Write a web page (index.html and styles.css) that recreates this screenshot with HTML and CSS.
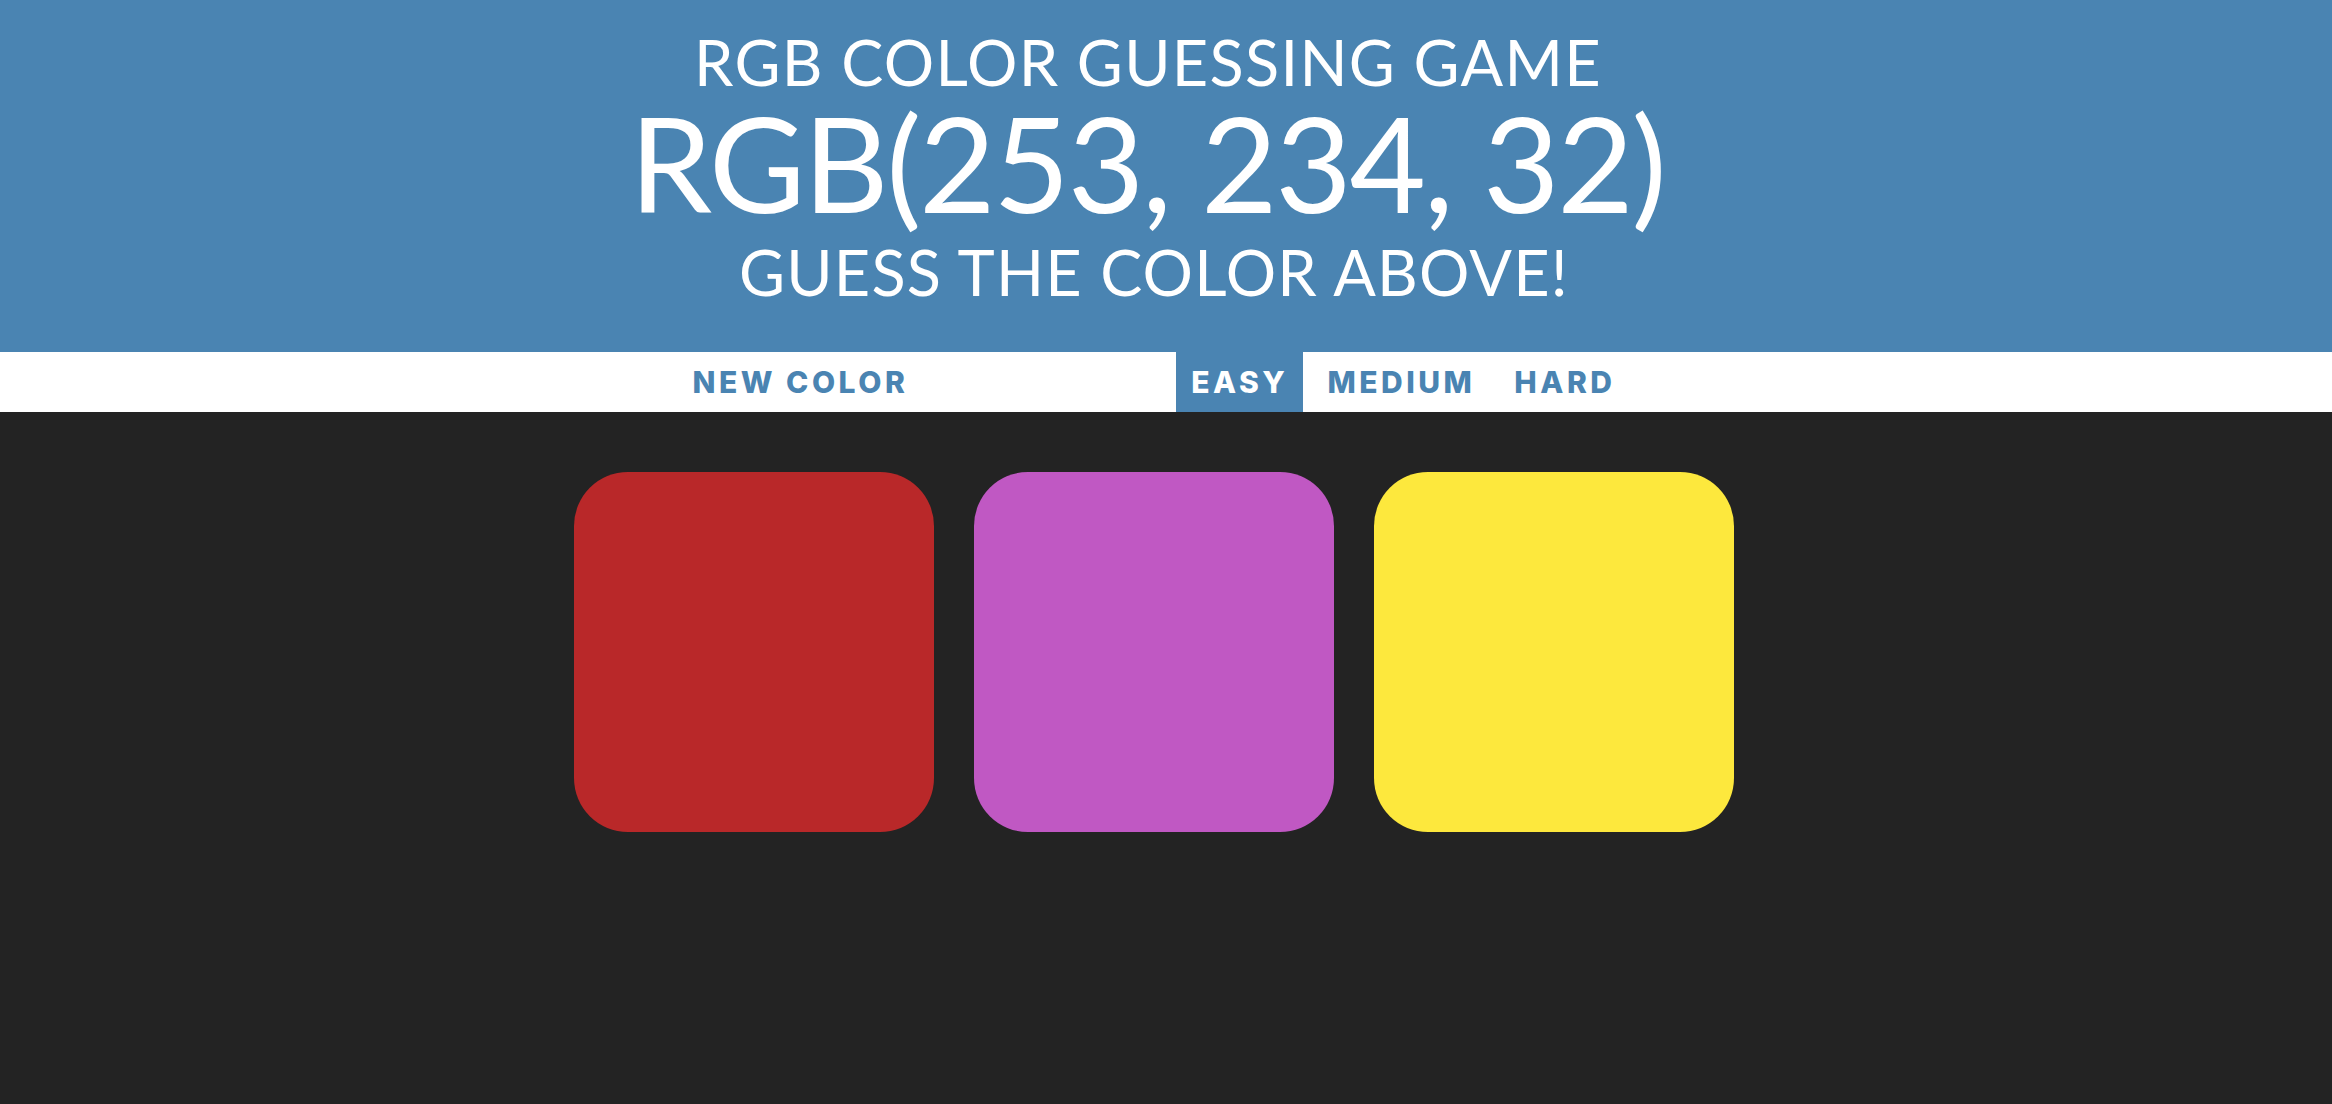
FILE: index.html
```html
<!DOCTYPE html>
<html lang="en">
  <head>
    <link rel="stylesheet" href="styles.css">
    <meta charset="UTF-8" />
    <meta name="viewport" content="width=device-width, initial-scale=1.0" />
    <title>RGB Color Guessing Game</title>
  </head>
  <body>
    <h1 class="header">
      <span class="header-title">RGB Color Guessing Game</span>
      <span class="header-target" id="colorDisplay">RGB(253, 234, 32)</span>
      <span class="header-hint">Guess the color above!</span>
    </h1>

    <div class="stripe">
      <button class="stripe-btn" id="reset">New Color</button>
      <span class="message" id="message"></span>
      <button class="stripe-btn mode selected">Easy</button>
      <button class="stripe-btn mode">Medium</button>
      <button class="stripe-btn mode">Hard</button>
    </div>

    <div class="board" id="board">
      <div class="square" style="background-color: rgb(185, 40, 41)"></div>
      <div class="square" style="background-color: rgb(192, 88, 195)"></div>
      <div class="square" style="background-color: rgb(253, 232, 61)"></div>
    </div>
  </body>
</html>
```

FILE: styles.css
```css
* {
  margin: 0;
  padding: 0;
  box-sizing: border-box;
}

body {
  background-color: #232323;
  font-family: "Lato", "Liberation Sans", sans-serif;
  min-height: 100vh;
}

/* Header with the target colour */
.header {
  display: flex;
  flex-direction: column;
  align-items: center;
  padding: 24px 24px 32px 0;
  background-color: #4a84b2;
  color: #fff;
  font-weight: 400;
  text-transform: uppercase;
  text-align: center;
}
.header-title {
  font-size: 63px;
  line-height: 76px;
  letter-spacing: 1.3px;
  margin-right: 12px;
}
.header-target {
  font-size: 132px;
  line-height: 124px;
  letter-spacing: -2.3px;
  margin-right: 14px;
}
.header-hint {
  font-size: 63px;
  line-height: 96px;
  letter-spacing: 1.2px;
}

/* Controls stripe */
.stripe {
  display: flex;
  justify-content: center;
  gap: 9px;
  height: 60px;
  padding-right: 24px;
  background-color: #fff;
}
.stripe-btn {
  height: 60px;
  padding: 0 15px;
  border: none;
  background: none;
  color: #4a84b2;
  font-family: "Inter", "Liberation Sans", sans-serif;
  font-size: 30px;
  font-weight: 800;
  letter-spacing: 3.5px;
  line-height: 60px;
  text-transform: uppercase;
  cursor: pointer;
}
.stripe-btn:hover,
.stripe-btn.selected {
  background-color: #4a84b2;
  color: #fff;
}
.message {
  width: 235px;
}

/* Colour squares */
.board {
  display: grid;
  grid-template-columns: repeat(3, 360px);
  gap: 40px;
  width: 1200px;
  margin: 40px auto 0;
  padding: 20px;
  position: relative;
  left: -12px;
}
.square {
  height: 360px;
  border-radius: 15%;
  cursor: pointer;
}
```
